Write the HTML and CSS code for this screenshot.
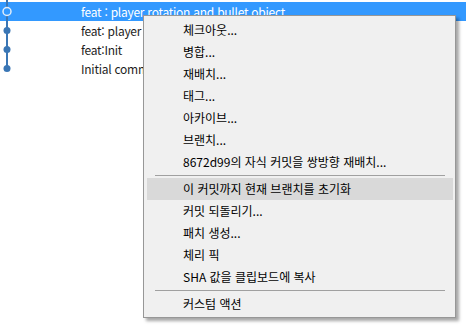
FILE: index.html
```html
<!DOCTYPE html>
<html lang="ko">
<head>
    <meta charset="UTF-8">
    <title>Commit Log</title>
    <link rel="stylesheet" href="styles.css">
</head>
<body>
    <div class="log">
        <div class="commit-row selected">
            <svg class="graph" width="14" height="19" viewBox="0 0 14 19">
                <line x1="7" y1="-3" x2="7" y2="19" class="lane"/>
                <circle cx="7" cy="9.5" r="4" class="node-head"/>
            </svg>
            <span class="commit-msg">feat : player rotation and bullet object</span>
        </div>
        <div class="commit-row">
            <svg class="graph" width="14" height="19" viewBox="0 0 14 19">
                <line x1="7" y1="0" x2="7" y2="19" class="lane"/>
                <circle cx="7" cy="9.5" r="3.5" class="node"/>
            </svg>
            <span class="commit-msg">feat: player</span>
        </div>
        <div class="commit-row">
            <svg class="graph" width="14" height="19" viewBox="0 0 14 19">
                <line x1="7" y1="0" x2="7" y2="19" class="lane"/>
                <circle cx="7" cy="9.5" r="3.5" class="node"/>
            </svg>
            <span class="commit-msg">feat:Init</span>
        </div>
        <div class="commit-row">
            <svg class="graph" width="14" height="19" viewBox="0 0 14 19">
                <line x1="7" y1="0" x2="7" y2="9.5" class="lane"/>
                <circle cx="7" cy="9.5" r="3.5" class="node"/>
            </svg>
            <span class="commit-msg">Initial commit</span>
        </div>
    </div>

    <div class="context-menu">
        <div class="menu-item">체크아웃...</div>
        <div class="menu-item">병합...</div>
        <div class="menu-item">재배치...</div>
        <div class="menu-item">태그...</div>
        <div class="menu-item">아카이브...</div>
        <div class="menu-item">브랜치...</div>
        <div class="menu-item">8672d99의 자식 커밋을 쌍방향 재배치...</div>
        <div class="menu-separator"></div>
        <div class="menu-item hover">이 커밋까지 현재 브랜치를 초기화</div>
        <div class="menu-item">커밋 되돌리기...</div>
        <div class="menu-item">패치 생성...</div>
        <div class="menu-item">체리 픽</div>
        <div class="menu-item">SHA 값을 클립보드에 복사</div>
        <div class="menu-separator"></div>
        <div class="menu-item">커스텀 액션</div>
    </div>
</body>
</html>
```

FILE: styles.css
```css
:root {
    --color-select: #3399ff;
    --color-lane: #3a76b5;
    --color-menu: #f0f0f0;
    --color-menu-border: #979797;
    --color-menu-hover: #d9d9d9;
}

body {
    margin: 0;
    background: white;
    font-family: 'Noto Sans CJK KR', 'Noto Sans', sans-serif;
    font-size: 12px;
    color: #1e1e1e;
}

.log {
    padding-top: 2px;
    letter-spacing: -0.25px;
}

.commit-row {
    display: flex;
    align-items: center;
    height: 19px;
    line-height: 16px;
}

.commit-row.selected {
    background: var(--color-select);
    color: white;
}

.graph {
    overflow: visible;
    flex: none;
}

.lane {
    stroke: var(--color-lane);
    stroke-width: 2;
}

.node {
    fill: var(--color-lane);
}

.node-head {
    fill: var(--color-select);
    stroke: #e2edf9;
    stroke-width: 1.5;
}

.commit-msg {
    margin-left: 67px;
    white-space: nowrap;
}

.context-menu {
    position: absolute;
    left: 143px;
    top: 15px;
    width: 306px;
    padding: 3px 2px 2px 3px;
    background: var(--color-menu);
    border: 1px solid var(--color-menu-border);
    box-shadow: 3px 3px 3px rgba(0, 0, 0, 0.35);
    color: black;
}

.menu-item {
    height: 16px;
    line-height: 16px;
    padding: 3px 0 3px 36px;
    white-space: nowrap;
}

.menu-item.hover {
    background: var(--color-menu-hover);
}

.menu-separator {
    height: 5px;
    display: flex;
    align-items: center;
    padding: 0 8px;
}

.menu-separator::before {
    content: '';
    flex: 1;
    height: 1px;
    background: #a0a0a0;
}
```
